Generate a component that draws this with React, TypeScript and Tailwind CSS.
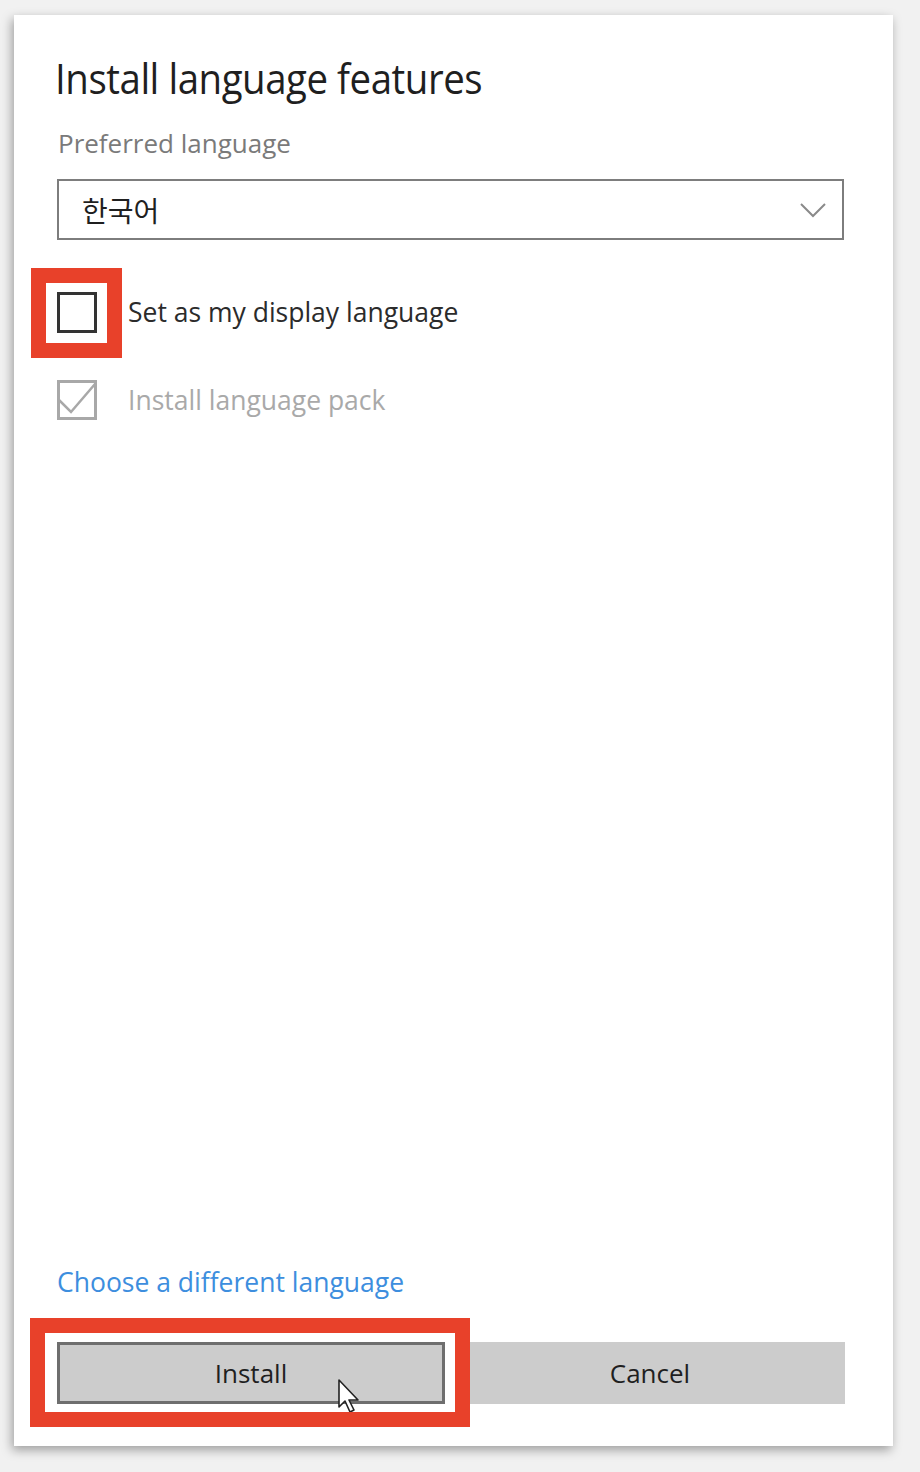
import React from "react";

const font = { fontFamily: '"Open Sans", "Noto Sans", "Noto Sans CJK KR", sans-serif' };

export default function App() {
  return (
    <div className="min-h-[1472px] w-[920px] bg-[#f1f1f1] pt-[15px] pl-[14px]" style={font}>
      <div className="relative flex h-[1431px] w-[879px] flex-col bg-white pl-[43px] pr-[48px] pb-[42px] shadow-[-2px_4px_10px_rgba(0,0,0,0.35)]">
        <h1 className="mt-[42px] -ml-[2px] origin-left scale-x-[0.915] text-[42px] leading-none tracking-[-0.5px] text-[#1f1f1f]">Install language features</h1>
        <div className="mt-[31px] ml-[1px] text-[26px] leading-none text-[#7a7a7a]">Preferred language</div>
        <div className="mt-[23px] flex h-[61px] w-[787px] items-center justify-between border-2 border-[#7d7d7d] pl-[23px] pr-[16px]">
          <span className="text-[28px] leading-none text-[#1f1f1f]" style={{ fontFamily: '"Noto Sans CJK KR", sans-serif' }}>한국어</span>
          <svg width="26" height="16" viewBox="0 0 26 16" fill="none">
            <path d="M1 2 L13 14 L25 2" stroke="#8a8a8a" strokeWidth="2" />
          </svg>
        </div>

        <div className="mt-[52px] flex items-center">
          <div className="relative h-[41px] w-[40px] border-[3px] border-[#333333]">
            <div className="absolute -left-[29px] -top-[27px] h-[90px] w-[91px] border-[15px] border-[#e8412a]" />
          </div>
          <span className="ml-[31px] text-[26.5px] leading-none text-[#2b2b2b]">Set as my display language</span>
        </div>

        <div className="mt-[47px] flex items-center">
          <div className="relative h-[40px] w-[40px] border-[3px] border-[#a8a8a8]">
            <svg className="absolute -left-[3px] -top-[3px]" width="40" height="40" viewBox="0 0 40 40" fill="none">
              <path d="M1 19 L14 32 L38 4" stroke="#a8a8a8" strokeWidth="2.5" />
            </svg>
          </div>
          <span className="ml-[31px] text-[26.5px] leading-none text-[#a9a9a9]">Install language pack</span>
        </div>

        <div className="flex-1" />

        <div className="text-[26.5px] leading-none text-[#3d8ede]">Choose a different language</div>

        <div className="mt-[47px] flex h-[62px] gap-[10px]">
          <div className="relative flex w-[388px] items-center justify-center border-[3px] border-[#6e6e6e] bg-[#cccccc]">
            <span className="text-[26px] leading-none text-[#1f1f1f]">Install</span>
            <svg className="absolute left-[277px] top-[34px]" width="26" height="36" viewBox="0 0 26 36">
              <path d="M2 1 L2 28 L8 22 L13 33 L17 31 L12 21 L21 21 Z" fill="#ffffff" stroke="#222222" strokeWidth="1.6" strokeLinejoin="round" />
            </svg>
            <div className="absolute -left-[30px] -top-[27px] h-[109px] w-[440px] border-[15px] border-[#e8412a]" />
          </div>
          <div className="flex flex-1 items-center justify-center bg-[#cccccc]">
            <span className="text-[26px] leading-none text-[#1f1f1f]">Cancel</span>
          </div>
        </div>
      </div>
    </div>
  );
}
